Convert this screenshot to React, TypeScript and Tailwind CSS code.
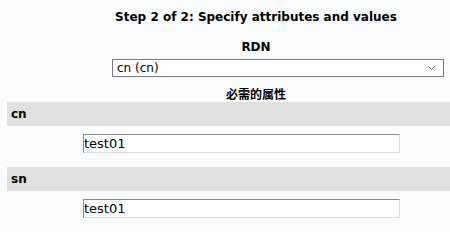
import React from "react";

const font = { fontFamily: "Tahoma, 'DejaVu Sans', 'Noto Sans CJK SC', sans-serif" };

function Field({ value }: { value: string }) {
  return (
    <div className="flex h-[41px] items-start pt-[8px]">
      <div className="ml-[83px] flex h-[19px] w-[317px] items-center border border-t-[#8a8a8a] border-l-[#8a8a8a] border-r-[#dcdcdc] border-b-[#dcdcdc] bg-white text-[13px] leading-none text-black">
        {value}
      </div>
    </div>
  );
}

function Bar({ label }: { label: string }) {
  return (
    <div className="ml-[7px] flex h-[24px] items-center bg-[#e0e0e0] pl-[4px] text-[12px] font-bold text-black">
      {label}
    </div>
  );
}

export default function App() {
  return (
    <div className="h-[232px] w-[450px] overflow-hidden bg-[#fafbfd]" style={font}>
      <div className="flex w-[505px] flex-col">
        <div className="ml-[7px] flex h-[32px] items-center justify-center pt-[1px] text-[12px] font-bold text-black">
          Step 2 of 2: Specify attributes and values
        </div>
        <div className="ml-[7px] flex h-[27px] items-center justify-center pt-[2px] text-[12px] font-bold text-black">
          RDN
        </div>
        <div className="ml-[112px] flex h-[18px] w-[332px] items-center justify-between border border-[#7a7a7a] bg-white pl-[4px] pr-[7px] text-[12px] leading-none text-black">
          <span>cn (cn)</span>
          <svg width="9" height="6" viewBox="0 0 9 6" fill="none">
            <path d="M1 1l3.5 3.5L8 1" stroke="#6b6b6b" strokeWidth="1" />
          </svg>
        </div>
        <div className="ml-[7px] flex h-[25px] items-center justify-center pt-[10px] text-[12px] font-bold text-black">
          必需的属性
        </div>
        <Bar label="cn" />
        <Field value="test01" />
        <Bar label="sn" />
        <Field value="test01" />
      </div>
    </div>
  );
}
